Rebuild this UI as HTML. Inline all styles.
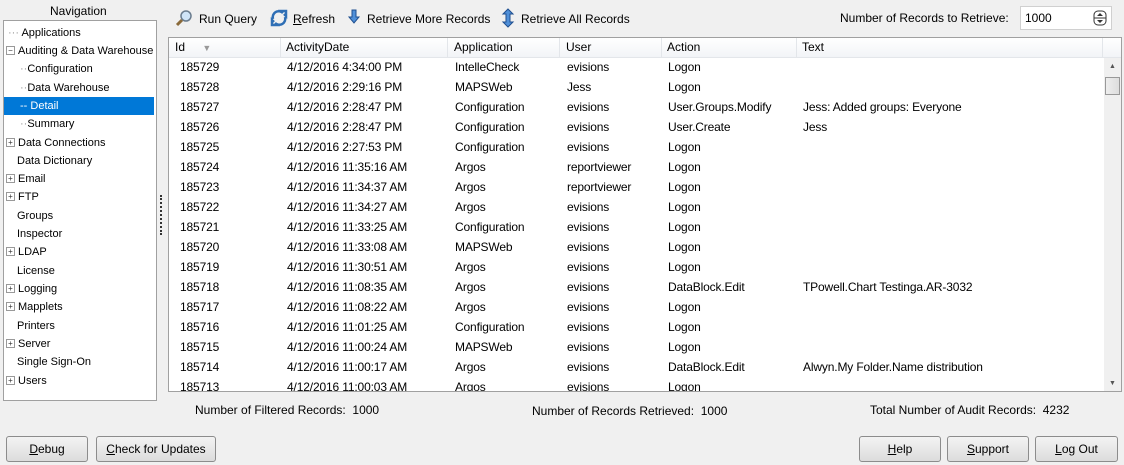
<!DOCTYPE html>
<html><head><style>
body{margin:0;width:1124px;height:465px;background:#f0f0f0;font-family:"Liberation Sans",sans-serif;font-size:12px;color:#000;position:relative;overflow:hidden}
.a{position:absolute;white-space:nowrap}
#nav{left:3px;top:20px;width:152px;height:379px;background:#fff;border:1px solid #a0a0a0;font-size:11px}
.ni{position:absolute;height:18px;line-height:18px}
.sel{background:#0078d7;color:#fff}
.pm{display:inline-block;width:7px;height:7px;border:1px solid #999;font-size:8px;line-height:7px;text-align:center;color:#333;margin-right:3px;vertical-align:1px}
#tbl{left:168px;top:37px;width:952px;height:353px;background:#fff;border:1px solid #a0a0a0;overflow:hidden}
.hd{position:absolute;top:0;height:19px;line-height:19px;background:linear-gradient(#fff,#f2f4f7);border-bottom:1px solid #e3e6ea;left:0;right:0}
.hd span{position:absolute;padding-left:6px;border-right:1px solid #e3e6ea;height:19px}
.row{position:absolute;left:0;height:20px;line-height:20px;width:935px;letter-spacing:-0.15px}
.row span{position:absolute}
.btn{position:absolute;height:24px;line-height:24px;text-align:center;border:1px solid #8c8c8c;border-radius:3px;background:linear-gradient(#f3f3f3,#dcdcdc)}
</style></head><body>
<div class="a" style="left:50px;top:4px;font-size:12px">Navigation</div>
<div id="nav" class="a">
<div class="ni" style="left:4px;top:3px;color:#999">··· <span style="color:#000">Applications</span></div>
<div class="ni" style="left:2px;top:21px"><span class="pm">−</span>Auditing &amp; Data Warehouse</div>
<div class="ni" style="left:16px;top:39px"><span style="color:#999">··</span>Configuration</div>
<div class="ni" style="left:16px;top:58px"><span style="color:#999">··</span>Data Warehouse</div>
<div class="ni sel" style="left:0;top:76px;width:150px"><span style="padding-left:16px">-- Detail</span></div>
<div class="ni" style="left:16px;top:94px"><span style="color:#999">··</span>Summary</div>
<div class="ni" style="left:2px;top:113px"><span class="pm">+</span>Data Connections</div>
<div class="ni" style="left:13px;top:131px">Data Dictionary</div>
<div class="ni" style="left:2px;top:149px"><span class="pm">+</span>Email</div>
<div class="ni" style="left:2px;top:167px"><span class="pm">+</span>FTP</div>
<div class="ni" style="left:13px;top:186px">Groups</div>
<div class="ni" style="left:13px;top:204px">Inspector</div>
<div class="ni" style="left:2px;top:222px"><span class="pm">+</span>LDAP</div>
<div class="ni" style="left:13px;top:241px">License</div>
<div class="ni" style="left:2px;top:259px"><span class="pm">+</span>Logging</div>
<div class="ni" style="left:2px;top:277px"><span class="pm">+</span>Mapplets</div>
<div class="ni" style="left:13px;top:296px">Printers</div>
<div class="ni" style="left:2px;top:314px"><span class="pm">+</span>Server</div>
<div class="ni" style="left:13px;top:332px">Single Sign-On</div>
<div class="ni" style="left:2px;top:351px"><span class="pm">+</span>Users</div>
</div>
<div class="a" style="left:160px;top:195px;width:2px;height:40px;border-left:2px dotted #333"></div>
<svg class="a" style="left:175px;top:9px" width="18" height="18"><circle cx="11" cy="7" r="5" fill="#cfe4f7" stroke="#6a7c8e" stroke-width="1.5"/><line x1="7" y1="11" x2="2" y2="16" stroke="#8a6a3a" stroke-width="3"/></svg>
<div class="a" style="left:199px;top:12px">Run Query</div>
<svg class="a" style="left:270px;top:9px" width="18" height="18"><path d="M3 10 A6 6 0 0 1 13 4 L11 2 L16 2 L16 7 L14 5" fill="none" stroke="#2f6fb5" stroke-width="2.5"/><path d="M15 8 A6 6 0 0 1 5 14 L7 16 L2 16 L2 11 L4 13" fill="none" stroke="#2f6fb5" stroke-width="2.5"/></svg>
<div class="a" style="left:293px;top:12px"><u>R</u>efresh</div>
<svg class="a" style="left:347px;top:9px" width="14" height="16"><path d="M5 1h4v7h3l-5 6-5-6h3z" fill="#4f8fd8" stroke="#1f4f8f"/></svg>
<div class="a" style="left:367px;top:12px">Retrieve More Records</div>
<svg class="a" style="left:501px;top:8px" width="14" height="20"><path d="M7 1l5 5h-3v8h3l-5 5-5-5h3V6H2z" fill="#4f8fd8" stroke="#1f4f8f"/></svg>
<div class="a" style="left:521px;top:12px">Retrieve All Records</div>
<div class="a" style="left:840px;top:11px">Number of Records to Retrieve:</div>
<div class="a" style="left:1020px;top:6px;width:90px;height:22px;background:#fff;border:1px solid #d0d0d0"><span style="position:absolute;left:4px;top:4px">1000</span>
<svg style="position:absolute;right:4px;top:3px" width="14" height="16"><rect x="1" y="1" width="12" height="14" rx="4" fill="#fff" stroke="#333"/><line x1="1" y1="8" x2="13" y2="8" stroke="#333"/><path d="M4 6l3-3 3 3z M4 10l3 3 3-3z" fill="#333"/></svg></div>
<div id="tbl" class="a">
<div class="hd">
<span style="left:0;width:105px">Id <span style="position:relative;color:#999;font-size:9px;padding-left:14px;border:none">▼</span></span>
<span style="left:111px;width:161px">ActivityDate</span>
<span style="left:279px;width:105px">Application</span>
<span style="left:391px;width:95px">User</span>
<span style="left:492px;width:129px">Action</span>
<span style="left:627px;width:300px">Text</span>
</div>
<div id="rows"></div>
<div style="position:absolute;right:0;top:20px;width:17px;bottom:0;background:#f0f0f0">
<div style="position:absolute;left:5px;top:5px;font-size:7px;color:#555">▲</div>
<div style="position:absolute;left:1px;top:19px;width:13px;height:16px;border:1px solid #999;background:linear-gradient(90deg,#eee,#ddd)"></div>
<div style="position:absolute;left:5px;bottom:4px;font-size:7px;color:#555">▼</div>
</div>
</div>
<script>
var d=[["185729","4/12/2016 4:34:00 PM","IntelleCheck","evisions","Logon",""],
["185728","4/12/2016 2:29:16 PM","MAPSWeb","Jess","Logon",""],
["185727","4/12/2016 2:28:47 PM","Configuration","evisions","User.Groups.Modify","Jess: Added groups: Everyone"],
["185726","4/12/2016 2:28:47 PM","Configuration","evisions","User.Create","Jess"],
["185725","4/12/2016 2:27:53 PM","Configuration","evisions","Logon",""],
["185724","4/12/2016 11:35:16 AM","Argos","reportviewer","Logon",""],
["185723","4/12/2016 11:34:37 AM","Argos","reportviewer","Logon",""],
["185722","4/12/2016 11:34:27 AM","Argos","evisions","Logon",""],
["185721","4/12/2016 11:33:25 AM","Configuration","evisions","Logon",""],
["185720","4/12/2016 11:33:08 AM","MAPSWeb","evisions","Logon",""],
["185719","4/12/2016 11:30:51 AM","Argos","evisions","Logon",""],
["185718","4/12/2016 11:08:35 AM","Argos","evisions","DataBlock.Edit","TPowell.Chart Testinga.AR-3032"],
["185717","4/12/2016 11:08:22 AM","Argos","evisions","Logon",""],
["185716","4/12/2016 11:01:25 AM","Configuration","evisions","Logon",""],
["185715","4/12/2016 11:00:24 AM","MAPSWeb","evisions","Logon",""],
["185714","4/12/2016 11:00:17 AM","Argos","evisions","DataBlock.Edit","Alwyn.My Folder.Name distribution"],
["185713","4/12/2016 11:00:03 AM","Argos","evisions","Logon",""]];
var x=[11,118,286,398,499,634],h="";
d.forEach(function(r,i){h+='<div class="row" style="top:'+(19+i*20)+'px">';r.forEach(function(c,j){h+='<span style="left:'+x[j]+'px">'+c+'</span>'});h+='</div>'});
document.getElementById('rows').innerHTML=h;
</script>
<div class="a" style="left:195px;top:403px">Number of Filtered Records:&nbsp; 1000</div>
<div class="a" style="left:532px;top:404px">Number of Records Retrieved:&nbsp; 1000</div>
<div class="a" style="left:870px;top:403px">Total Number of Audit Records:&nbsp; 4232</div>
<div class="btn" style="left:6px;top:436px;width:80px"><u>D</u>ebug</div>
<div class="btn" style="left:96px;top:436px;width:118px"><u>C</u>heck for Updates</div>
<div class="btn" style="left:859px;top:436px;width:80px"><u>H</u>elp</div>
<div class="btn" style="left:947px;top:436px;width:80px"><u>S</u>upport</div>
<div class="btn" style="left:1035px;top:436px;width:81px"><u>L</u>og Out</div>
</body></html>
